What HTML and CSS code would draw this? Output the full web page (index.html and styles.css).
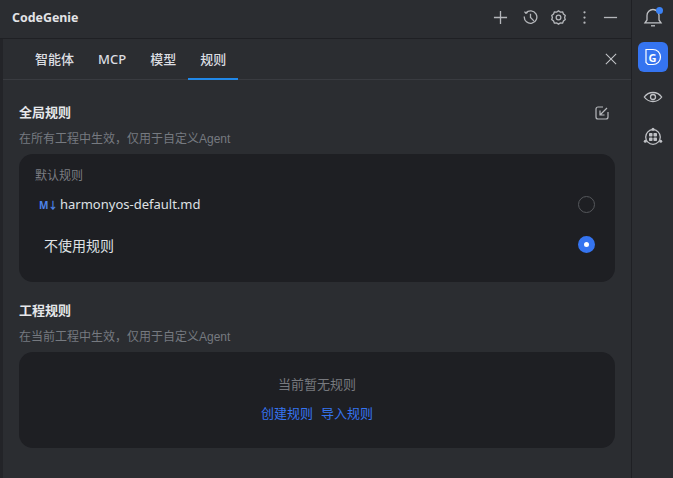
FILE: index.html
```html
<!DOCTYPE html>
<html lang="zh-CN">
<head>
<meta charset="utf-8">
<title>CodeGenie</title>
<link rel="stylesheet" href="styles.css">
</head>
<body>
<div class="app">
  <div class="main">
    <header class="titlebar">
      <span class="brand">CodeGenie</span>
      <div class="title-actions">
        <svg class="ico" viewBox="0 0 16 16"><path d="M8 1v14M1 8h14"/></svg>
        <svg class="ico clock" viewBox="0 0 16 16"><path d="M3 3.200A6.700 6.700 0 1 1 1.400 7"/><path d="M8 4v4l3.600 3.600"/><path d="M1.600 1.800 3 3.400l1.900-.9"/></svg>
        <svg class="ico gear" viewBox="0 0 16 16"><path d="M8 .9l2 1.300 2.400-.1.900 2.200 1.900 1.500L14.500 8l.7 2.200-1.900 1.500-.9 2.200-2.400-.1-2 1.300-2-1.300-2.400.1-.9-2.200L.8 10.200 1.500 8 .8 5.800l1.900-1.500.9-2.200 2.400.1z"/><circle cx="8" cy="8" r="2.500"/></svg>
        <svg class="ico dots" viewBox="0 0 16 16"><circle cx="8" cy="2.500" r="1.200"/><circle cx="8" cy="8" r="1.200"/><circle cx="8" cy="13.500" r="1.200"/></svg>
        <svg class="ico" viewBox="0 0 16 16"><path d="M1 8h14"/></svg>
      </div>
    </header>
    <div class="panel">
      <nav class="tabs">
        <a class="tab">智能体</a>
        <a class="tab">MCP</a>
        <a class="tab">模型</a>
        <a class="tab active">规则</a>
        <svg class="close" viewBox="0 0 14 14"><path d="M1 1l12 12M13 1 1 13"/></svg>
      </nav>
      <section class="content">
        <div class="sec-head global">
          <h2>全局规则</h2>
          <svg class="import" viewBox="0 0 16 16"><path d="M9 2H4a2 2 0 0 0-2 2v8a2 2 0 0 0 2 2h8a2 2 0 0 0 2-2V7"/><path d="M13 3 6.500 9.500M6 5.500v4.500h4.500"/></svg>
        </div>
        <p class="desc">在所有工程中生效，仅用于自定义Agent</p>
        <div class="card rules">
          <div class="card-label">默认规则</div>
          <div class="row md">
            <span class="md-mark">M↓</span>
            <span class="row-text">harmonyos-default.md</span>
            <span class="radio"></span>
          </div>
          <div class="row none">
            <span class="row-text">不使用规则</span>
            <span class="radio on"></span>
          </div>
        </div>
        <div class="sec-head project">
          <h2>工程规则</h2>
        </div>
        <p class="desc">在当前工程中生效，仅用于自定义Agent</p>
        <div class="card empty">
          <div class="empty-text">当前暂无规则</div>
          <div class="links"><a>创建规则</a><a>导入规则</a></div>
        </div>
      </section>
    </div>
  </div>
  <aside class="rail">
    <div class="rail-item bell">
      <svg class="rail-ico" viewBox="0 0 20 20"><path d="M2 15.800h16l-2-2.800V8.500A6 6 0 0 0 10 2.500a6 6 0 0 0-6 6V13z"/><path d="M8 18.800h4"/></svg>
      <span class="dot"></span>
    </div>
    <div class="rail-item g-btn">
      <svg class="g-ico" viewBox="0 0 18 18"><path d="M2 1.500h7a7.500 7.500 0 0 1 0 15H4L2 14.500z"/></svg>
      <span class="g-letter">G</span>
    </div>
    <div class="rail-item">
      <svg class="rail-ico" viewBox="0 0 20 20"><path d="M1.300 10C3.400 7 6.300 5.500 10 5.500s6.600 1.500 8.700 4.500c-2.100 3-5 4.500-8.700 4.500S3.400 13 1.300 10z"/><circle cx="10" cy="10" r="2.500"/></svg>
    </div>
    <div class="rail-item">
      <svg class="rail-ico" viewBox="0 0 20 20"><circle cx="10" cy="10" r="7.300"/><circle class="fill" cx="10" cy="2.200" r="1.500"/><circle class="fill" cx="2.300" cy="14.300" r="1.500"/><circle class="fill" cx="17.700" cy="14.300" r="1.500"/><rect class="fill" x="6" y="6" width="3.500" height="3.500" rx=".8"/><rect class="fill" x="10.500" y="6" width="3.500" height="3.500" rx=".8"/><rect class="fill" x="6" y="10.500" width="3.500" height="3.500" rx=".8"/><rect class="fill" x="10.500" y="10.500" width="3.500" height="3.500" rx=".8"/></svg>
    </div>
  </aside>
</div>
</body>
</html>
```

FILE: styles.css
```css
* { box-sizing: border-box; }
html, body { margin: 0; height: 100%; overflow: hidden; }
body {
  background: #2b2d31;
  color: #dfe1e5;
  font-family: "Noto Sans", "Noto Sans CJK SC", sans-serif;
  font-size: 13px;
}
.app { display: flex; width: 673px; height: 478px; }
.main { flex: 0 0 631px; display: flex; flex-direction: column; }
.titlebar {
  height: 39px;
  flex: none;
  display: flex;
  align-items: center;
  justify-content: space-between;
  padding: 0 13px 3px 12px;
  border-bottom: 1px solid #1f2024;
}
.brand { font-size: 12.400px; font-weight: 700; color: #e2e3e6; }
.title-actions { display: flex; align-items: center; gap: 11px; }
.ico { width: 15px; height: 15px; fill: none; stroke: #b4b6ba; stroke-width: 1.400; }
.clock { margin-left: 4px; }
.gear { margin-left: 2px; }
.dots { fill: #b4b6ba; stroke: none; }
.panel {
  flex: 1;
  margin-left: 3px;
  box-shadow: -3px 0 0 #232428;
  display: flex;
  flex-direction: column;
}
.tabs {
  height: 41px;
  flex: none;
  display: flex;
  align-items: stretch;
  padding-left: 20px;
  padding-right: 14px;
  border-bottom: 1px solid #393b40;
}
.tab {
  padding: 0 12px;
  display: flex;
  align-items: center;
  font-size: 13px;
  font-weight: 500;
  color: #dcdee2;
  margin-bottom: -1px;
  border-bottom: 2px solid transparent;
}
.tab.active { border-bottom-color: #2188e8; }
.close { width: 12px; height: 12px; margin: auto 0 auto auto; fill: none; stroke: #c3c5c9; stroke-width: 1.200; }
.content { padding: 0 16px; flex: 1; }
.sec-head { display: flex; align-items: center; justify-content: space-between; height: 20px; }
.sec-head.global { margin-top: 21px; padding-right: 5px; }
.sec-head.project { margin-top: 17px; }
h2 { margin: 0; font-size: 13px; font-weight: 700; color: #e6e7ea; }
.import { width: 16px; height: 16px; margin-top: 4px; fill: none; stroke: #b8babe; stroke-width: 1.200; }
.desc {
  margin: 9px 0 6px;
  font-family: "Liberation Sans", "Noto Sans CJK SC", sans-serif;
  font-size: 12px;
  line-height: 18px;
  color: #767a80;
}
.card { background: #1e1f23; border-radius: 14px; }
.rules { height: 128px; padding: 13px 20px 0 16px; }
.card-label { font-size: 12px; line-height: 18px; color: #7b7d82; }
.row { display: flex; align-items: center; }
.row-text { flex: 1; font-size: 13px; color: #dfe1e5; }
.md { height: 28px; margin-top: 5px; }
.md-mark { width: 25px; padding-left: 4px; font-size: 10px; font-weight: 700; color: #4d84e8; letter-spacing: -.5px; white-space: nowrap; }
.none { height: 28px; margin-top: 12px; padding-left: 9px; }
.none .row-text { font-size: 14px; padding-top: 2px; }
.radio { width: 17px; height: 17px; border-radius: 50%; border: 1px solid #55575b; flex: none; }
.radio.on { border: 6px solid #3574f0; background: #fff; }
.empty { height: 96px; display: flex; flex-direction: column; align-items: center; padding-top: 23px; }
.empty-text { font-size: 13px; line-height: 19px; color: #77797e; }
.links { display: flex; gap: 8px; margin-top: 10px; font-size: 13px; line-height: 19px; color: #3574f0; }
.rail {
  flex: 0 0 42px;
  border-left: 1px solid #1f2024;
  display: flex;
  flex-direction: column;
  align-items: center;
  padding-top: 2px;
  gap: 10px;
  background: #2b2d31;
}
.rail-item { position: relative; width: 30px; height: 30px; display: flex; align-items: center; justify-content: center; }
.rail-ico { width: 20px; height: 20px; fill: none; stroke: #bfc1c5; stroke-width: 1.300; }
.rail-ico .fill { fill: #bfc1c5; stroke: none; }
.dot { position: absolute; top: 5px; right: 5px; width: 7px; height: 7px; border-radius: 50%; background: #3b82f6; }
.g-btn { background: #3574f0; border-radius: 6px; }
.g-ico { width: 18px; height: 18px; fill: none; stroke: #fff; stroke-width: 1.200; }
.g-letter { position: absolute; inset: 0; display: flex; align-items: center; justify-content: center; font-size: 11px; font-weight: 700; color: #fff; }
```
